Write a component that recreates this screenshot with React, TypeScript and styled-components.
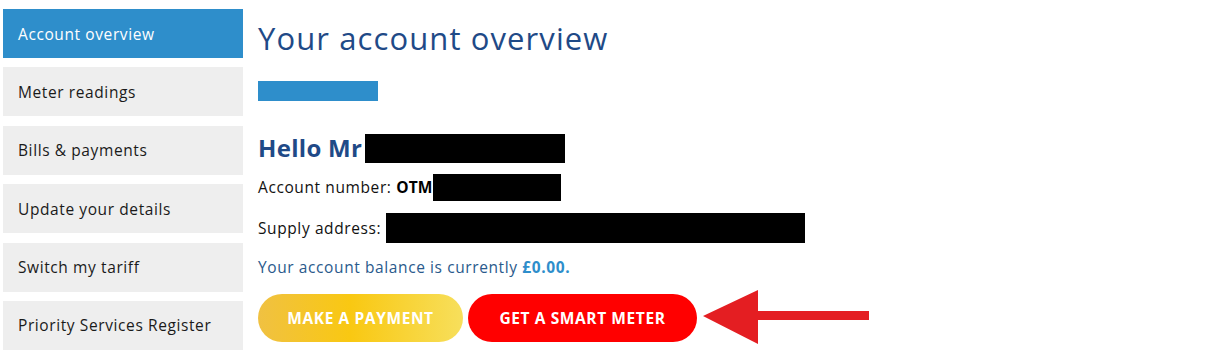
import React from "react";
import styled, { createGlobalStyle } from "styled-components";

const Global = createGlobalStyle`
  html, body { margin: 0; padding: 0; background: #ffffff; }
  body { font-family: "Open Sans", "Noto Sans", sans-serif; }
  * { box-sizing: border-box; }
`;

const Page = styled.div`
  display: flex;
  align-items: flex-start;
  gap: 15px;
  padding: 9px 0 0 3px;
  width: 1222px;
  height: 351px;
  overflow: hidden;
`;

const Sidebar = styled.nav`
  display: flex;
  flex-direction: column;
  gap: 9.4px;
  width: 240px;
  flex-shrink: 0;
`;

const NavItem = styled.a<{ $active?: boolean }>`
  display: flex;
  align-items: center;
  height: 49px;
  padding-left: 15px;
  font-size: 15.5px;
  letter-spacing: 0.6px;
  color: ${(p) => (p.$active ? "#ffffff" : "#1a1a1a")};
  background: ${(p) => (p.$active ? "#2e8ecb" : "#eeeeee")};
  text-decoration: none;
`;

const Main = styled.main`
  display: flex;
  flex-direction: column;
  align-items: flex-start;
  flex: 1;
`;

const Title = styled.h1`
  margin: 9px 0 0 0;
  font-size: 31px;
  font-weight: 400;
  line-height: 40px;
  color: #1f4a87;
  letter-spacing: 1.1px;
`;

const Bar = styled.div`
  margin-top: 23px;
  width: 120px;
  height: 20px;
  background: #2e8ecb;
`;

const Hello = styled.h2`
  display: flex;
  align-items: center;
  gap: 3px;
  margin: 32px 0 0 0;
  font-size: 24px;
  font-weight: 700;
  color: #1f4a87;
  line-height: 30px;
  letter-spacing: 0.3px;
`;

const Redact = styled.span<{ $w: number; $h: number }>`
  display: inline-block;
  width: ${(p) => p.$w}px;
  height: ${(p) => p.$h}px;
  background: #000000;
`;

const Row = styled.div<{ $mt: number }>`
  display: flex;
  align-items: center;
  margin-top: ${(p) => p.$mt}px;
  font-size: 15.5px;
  letter-spacing: 0.6px;
  color: #111111;
  line-height: 28px;
`;

const Strong = styled.b`
  font-weight: 700;
  color: #000;
  letter-spacing: 0.2px;
`;

const Balance = styled.p`
  margin: 10px 0 0 0;
  font-size: 15.5px;
  letter-spacing: 0.6px;
  line-height: 28px;
  color: #2a5a8c;
`;

const Amount = styled.b`
  color: #2e8ecb;
  font-weight: 700;
`;

const Actions = styled.div`
  display: flex;
  align-items: center;
  gap: 5px;
  margin-top: 9px;
`;

const Pill = styled.button<{ $variant: "yellow" | "red"; $w: number }>`
  height: 48px;
  width: ${(p) => p.$w}px;
  border: none;
  border-radius: 24px;
  font-family: inherit;
  font-size: 15.5px;
  font-weight: 700;
  color: #ffffff;
  text-transform: uppercase;
  letter-spacing: 0.6px;
  cursor: pointer;
  background: ${(p) =>
    p.$variant === "yellow"
      ? "linear-gradient(90deg, #f0c142 0%, #f9c812 45%, #f7df5c 100%)"
      : "#ff0000"};
`;

const Arrow = styled.svg`
  margin-left: 1px;
  flex-shrink: 0;
`;

export default function App() {
  return (
    <>
      <Global />
      <Page>
        <Sidebar>
          <NavItem $active>Account overview</NavItem>
          <NavItem>Meter readings</NavItem>
          <NavItem>Bills &amp; payments</NavItem>
          <NavItem>Update your details</NavItem>
          <NavItem>Switch my tariff</NavItem>
          <NavItem>Priority Services Register</NavItem>
        </Sidebar>
        <Main>
          <Title>Your account overview</Title>
          <Bar />
          <Hello>
            Hello Mr<Redact $w={200} $h={29} />
          </Hello>
          <Row $mt={10}>
            Account number:&nbsp;<Strong>OTM</Strong>
            <Redact $w={128} $h={27} />
          </Row>
          <Row $mt={12}>
            Supply address:&nbsp;<Redact $w={419} $h={30} />
          </Row>
          <Balance>
            Your account balance is currently <Amount>£0.00.</Amount>
          </Balance>
          <Actions>
            <Pill $variant="yellow" $w={205}>Make a payment</Pill>
            <Pill $variant="red" $w={229}>Get a smart meter</Pill>
            <Arrow width="168" height="56" viewBox="0 0 168 56">
              <polygon points="0,26 55,0 55,21 166,21 166,30 55,30 55,54" fill="#e41e22" />
            </Arrow>
          </Actions>
        </Main>
      </Page>
    </>
  );
}
